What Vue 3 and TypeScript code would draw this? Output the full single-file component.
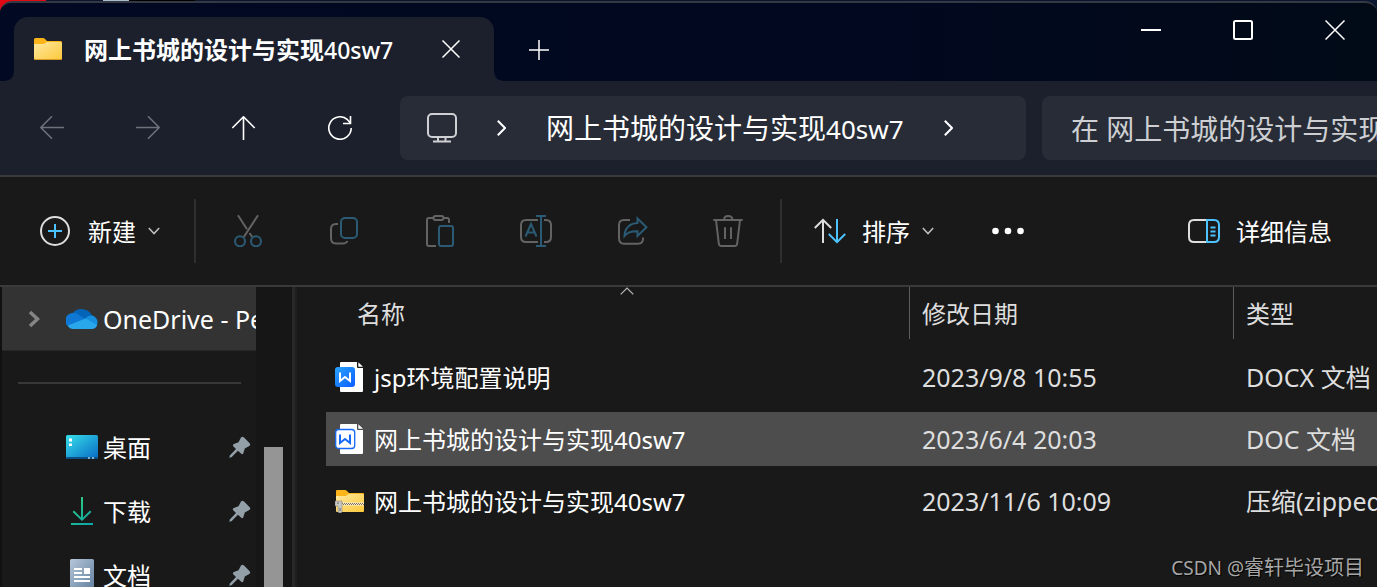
<script setup lang="ts">
import { ref } from 'vue'

interface FileRow {
  name: string
  date: string
  type: string
  icon: 'docx' | 'doc' | 'zip'
}

interface Place {
  name: string
  icon: 'desktop' | 'download' | 'document'
}

const folder = '网上书城的设计与实现'
const suffix = '40sw7'

const files: FileRow[] = [
  { name: 'jsp环境配置说明', date: '2023/9/8 10:55', type: 'DOCX 文档', icon: 'docx' },
  { name: folder + suffix, date: '2023/6/4 20:03', type: 'DOC 文档', icon: 'doc' },
  { name: folder + suffix, date: '2023/11/6 10:09', type: '压缩(zipped)', icon: 'zip' },
]

const places: Place[] = [
  { name: '桌面', icon: 'desktop' },
  { name: '下载', icon: 'download' },
  { name: '文档', icon: 'document' },
]

const selected = ref(1)
const query = ref('')
</script>

<template>
  <div class="desktop">
    <div class="window">
      <header class="titlebar">
        <div class="tab">
          <svg class="tab-folder" width="28" height="22" viewBox="0 0 28 22" aria-hidden="true">
            <defs>
              <linearGradient id="folderFace" x1="0" y1="0" x2="1" y2="1">
                <stop offset="0" stop-color="#ffe8a0" />
                <stop offset="1" stop-color="#fdc93c" />
              </linearGradient>
            </defs>
            <path d="M0 1.5Q0 0 1.5 0H9Q10 0 10.8.8L13 3H26.500Q28 3 28 4.500V21H0Z" fill="#fbb51a" />
            <path d="M0 6H9.500Q10.500 6 11.200 5.200L12.500 4H26.500Q28 4 28 5V20.500Q28 21.500 27 21.500H1Q0 21.500 0 20.500Z" fill="url(#folderFace)" />
            <path d="M0 20.500Q0 22 1.500 22H26.500Q28 22 28 20.500Q28 21.300 26.500 21.300H1.500Q0 21.300 0 20.500Z" fill="#f0a51a" />
          </svg>
          <span class="tab-title">{{ folder }}<span class="tab-latin">{{ suffix }}</span></span>
          <button class="tab-close" type="button" aria-label="关闭标签页">
            <svg width="18" height="18" viewBox="0 0 18 18"><path d="M.5.5l17 17M17.500.5l-17 17" /></svg>
          </button>
        </div>
        <button class="tab-add" type="button" aria-label="新建标签页">
          <svg width="20" height="20" viewBox="0 0 20 20"><path d="M10 0v20M0 10h20" /></svg>
        </button>
        <div class="controls">
          <button type="button" aria-label="最小化">
            <svg width="20" height="20" viewBox="0 0 20 20"><path d="M0 10h20" stroke-width="2" /></svg>
          </button>
          <button type="button" aria-label="最大化">
            <svg width="20" height="20" viewBox="0 0 20 20"><rect x="1" y="1" width="18" height="18" rx="1.500" stroke-width="2" /></svg>
          </button>
          <button type="button" aria-label="关闭">
            <svg width="20" height="20" viewBox="0 0 20 20"><path d="M.5.5l19 19M19.500.5l-19 19" /></svg>
          </button>
        </div>
      </header>

      <nav class="navbar" aria-label="导航">
        <div class="nav-buttons">
          <button class="dim" type="button" aria-label="后退">
            <svg width="24" height="24" viewBox="0 0 24 24"><path d="M24 11.500H1M12 .3L.8 11.500 12 22.700" /></svg>
          </button>
          <button class="dim" type="button" aria-label="前进">
            <svg width="24" height="24" viewBox="0 0 24 24"><path d="M0 11.500h23M12 .3L23.200 11.500 12 22.700" /></svg>
          </button>
          <button type="button" aria-label="上移">
            <svg width="24" height="24" viewBox="0 0 24 24"><path d="M11.500 24V1M.3 12L11.500 .8 22.700 12" /></svg>
          </button>
          <button type="button" aria-label="刷新">
            <svg width="24" height="24" viewBox="0 0 24 24"><path d="M23.200 12A11.200 11.200 0 1 1 19.500 3.700L22.500 7M22.500 0V7.500H15" /></svg>
          </button>
        </div>
        <div class="address">
          <svg width="30" height="30" viewBox="0 0 30 30" class="monitor" aria-hidden="true">
            <rect x="1" y="1" width="28" height="23" rx="4" />
            <path d="M11 24v4M18.500 24v4M6 28.500h18" />
          </svg>
          <svg width="9" height="16" viewBox="0 0 9 16" class="crumb" aria-hidden="true"><path d="M.8.8L8 8 .8 15.200" /></svg>
          <span class="address-text">{{ folder }}<span class="address-latin">{{ suffix }}</span></span>
          <svg width="9" height="16" viewBox="0 0 9 16" class="crumb" aria-hidden="true"><path d="M.8.8L8 8 .8 15.200" /></svg>
        </div>
        <input v-model="query" class="search" type="text" aria-label="搜索" :placeholder="`在 ${folder}`" />
      </nav>

      <div class="toolbar" role="toolbar" aria-label="命令">
        <button class="command new" type="button">
          <svg width="30" height="30" viewBox="0 0 30 30" aria-hidden="true">
            <circle cx="15" cy="15" r="14" class="lt" /><path d="M15 8v14M8 15h14" class="accent" />
          </svg>
          <span>新建</span>
          <svg width="12" height="8" viewBox="0 0 12 8" class="drop" aria-hidden="true"><path d="M.8 1L6 6.500 11.200 1" /></svg>
        </button>
        <span class="divider"></span>
        <button class="tool" type="button" aria-label="剪切">
          <svg width="32" height="32" viewBox="0 0 32 32">
            <path d="M6 .3L15 14.200M26 .3L11.800 22M17.500 18L20.200 22" class="g" />
            <circle cx="8" cy="26.300" r="5" class="b" /><circle cx="24" cy="26.300" r="5" class="b" />
          </svg>
        </button>
        <button class="tool" type="button" aria-label="复制">
          <svg width="32" height="32" viewBox="0 0 32 32">
            <path d="M10 9H8Q3 9 3 14V23Q3 28.500 8 28.500H14.500Q18.500 28.500 19.500 26" class="g" />
            <rect x="13" y="3" width="16" height="20" rx="4" class="b" />
          </svg>
        </button>
        <button class="tool" type="button" aria-label="粘贴">
          <svg width="32" height="32" viewBox="0 0 32 32">
            <path d="M9 3H5Q3 3 3 5V29Q3 31 5 31H12M20 3H23Q25 3 25 5V8" class="g" />
            <rect x="9.500" y="1" width="10" height="4" rx="2" class="g" />
            <rect x="15" y="11" width="14" height="20" rx="2" class="b" />
          </svg>
        </button>
        <button class="tool" type="button" aria-label="重命名">
          <svg width="32" height="32" viewBox="0 0 32 32">
            <path d="M18 5H6Q1 5 1 10V22Q1 27 6 27H18M24 5H26Q31 5 31 10V22Q31 27 26 27H24" class="g" />
            <path d="M16 1H26M16 31H26M21 1V31M5.500 21.500L11 9L16.500 21.500M7.500 17.500H14.500" class="b" />
          </svg>
        </button>
        <button class="tool" type="button" aria-label="共享">
          <svg width="32" height="32" viewBox="0 0 32 32">
            <path d="M14 5H8Q3 5 3 10V23Q3 28.700 8 28.700H22Q27 28.700 27 24V22.500" class="g" />
            <path d="M21.500 3.500L30.500 12.300L21.500 21V16.200C15 16 11 17.500 8.500 21C8.500 14 13 8.500 21.500 8Z" class="b" />
          </svg>
        </button>
        <button class="tool" type="button" aria-label="删除">
          <svg width="32" height="32" viewBox="0 0 32 32">
            <path d="M1.300 5H30.700M12 5Q12 1 16.200 1T20.400 5M4 5L6.800 28.500Q7 31 9.500 31H22.500Q25 31 25.200 28.500L28 5M13 12.300V24M19 12.300V24" class="g" />
          </svg>
        </button>
        <span class="divider"></span>
        <button class="command sort" type="button">
          <svg width="32" height="32" viewBox="0 0 32 32" aria-hidden="true">
            <path d="M9 28V5M.8 13L9 4.800L17.200 13" class="lt" />
            <path d="M23 4V27M14.800 19L23 27.200L31.200 19" class="accent" />
          </svg>
          <span>排序</span>
          <svg width="12" height="8" viewBox="0 0 12 8" class="drop" aria-hidden="true"><path d="M.8 1L6 6.500 11.200 1" /></svg>
        </button>
        <button class="more" type="button" aria-label="查看更多">
          <svg width="32" height="8" viewBox="0 0 32 8"><circle cx="3.500" cy="4" r="3.300" /><circle cx="16" cy="4" r="3.300" /><circle cx="28.500" cy="4" r="3.300" /></svg>
        </button>
        <button class="command details" type="button">
          <svg width="32" height="32" viewBox="0 0 32 32" aria-hidden="true">
            <path d="M19 5H6Q1 5 1 10V22Q1 27 6 27H19" class="lt" />
            <path d="M19 5H26Q31 5 31 10V22Q31 27 26 27H19ZM22.500 12.500H27.500M22.500 16.500H27.500M22.500 20.500H27.500" class="accent" />
          </svg>
          <span>详细信息</span>
        </button>
      </div>

      <div class="body">
        <aside class="sidebar">
          <div class="tree">
            <a href="#" class="place onedrive">
              <svg class="expander" width="12" height="18" viewBox="0 0 12 18" aria-hidden="true"><path d="M2 2L9.500 9 2 16" /></svg>
              <span class="icon-slot">
                <svg width="32" height="21" viewBox="0 0 32 21" aria-hidden="true">
                  <path d="M6 6.500A11 10 0 0 1 26 7.500L20 14L8 12Z" fill="#0364b8" />
                  <path d="M7.500 5A8 8 0 0 1 13 7L20 11.500L8 20H6A7.500 7.500 0 0 1 7.500 5Z" fill="#0f78d4" />
                  <path d="M19 11Q22 6.800 26 7.500A7 7 0 0 1 30.500 18L20 13Z" fill="#1490df" />
                  <path d="M1.800 17.500L19.500 10.500L31.200 17Q30 21 25.500 21H7Q3.500 21 1.800 17.500Z" fill="#28a8ea" />
                </svg>
              </span>
              <span class="place-name wide">OneDrive - Personal</span>
            </a>
            <div class="rule"></div>
            <a v-for="p in places" :key="p.name" href="#" class="place">
              <span class="expander-gap"></span>
              <span class="icon-slot">
                <svg v-if="p.icon === 'desktop'" width="32" height="24" viewBox="0 0 32 24" aria-hidden="true">
                  <defs>
                    <linearGradient id="deskFace" x1="0" y1="0" x2="1" y2="1">
                      <stop offset="0" stop-color="#37e0ea" /><stop offset="1" stop-color="#0869c4" />
                    </linearGradient>
                  </defs>
                  <rect width="32" height="24" rx="1.500" fill="url(#deskFace)" />
                  <path d="M0 22H32Q32 24 30.500 24H1.500Q0 24 0 22Z" fill="#0a4f86" />
                  <path d="M3 3.500H6V6.500H3ZM3 8.500H6V11H3Z" fill="#fff" />
                  <path d="M22 22.300h2v1.500h-2ZM26 22.300h2v1.500h-2Z" fill="#a8cbe6" />
                </svg>
                <svg v-else-if="p.icon === 'download'" width="22" height="28" viewBox="0 0 22 28" aria-hidden="true">
                  <defs>
                    <linearGradient id="downFace" gradientUnits="userSpaceOnUse" x1="0" y1="0" x2="22" y2="28">
                      <stop offset="0" stop-color="#35d07f" /><stop offset="1" stop-color="#0aa5a8" />
                    </linearGradient>
                  </defs>
                  <path d="M10 0h2v20.500l7-7 1.400 1.400L11 24 1.600 14.900 3 13.500l7 7ZM0 26H22V28H0Z" fill="url(#downFace)" />
                </svg>
                <svg v-else width="24" height="32" viewBox="0 0 24 32" aria-hidden="true">
                  <defs>
                    <linearGradient id="paperFace" x1="0" y1="0" x2="1" y2="1">
                      <stop offset="0" stop-color="#b6c6d8" /><stop offset="1" stop-color="#607f9f" />
                    </linearGradient>
                  </defs>
                  <rect width="24" height="32" rx="1.500" fill="url(#paperFace)" />
                  <path d="M4 9H12V11H4ZM4 13H12V15H4ZM14 9H20V15H14ZM4 17H20V19H4ZM4 21H20V23H4Z" fill="#fff" />
                </svg>
              </span>
              <span class="place-name">{{ p.name }}</span>
              <svg class="pin" width="22" height="22" viewBox="0 0 22 22" aria-hidden="true">
                <path d="M12 1.500Q13.500 0 15 1.500L20.700 7.200Q22 8.800 20.300 9.900L15.800 12.500L14.300 17.200Q13.500 19 12 17.600L8.900 14.800L2.500 21.200L.3 21.700L.8 19.500L7 13L4.200 10.200Q3 8.600 4.900 7.900L9.500 6.300Z" fill="#94a0a8" />
              </svg>
            </a>
          </div>
          <div class="track"><div class="thumb"></div></div>
          <div class="splitter"></div>
        </aside>

        <main class="listing">
          <table>
            <colgroup><col class="c-name" /><col class="c-date" /><col /></colgroup>
            <thead>
              <tr>
                <th class="th-name" scope="col" aria-sort="ascending">
                  <button type="button">名称</button>
                  <svg class="caret" width="14" height="8" viewBox="0 0 14 8" aria-hidden="true"><path d="M.7 7.300L7 1l6.300 6.300" /></svg>
                </th>
                <th scope="col"><button type="button">修改日期</button></th>
                <th scope="col"><button type="button" class="last">类型</button></th>
              </tr>
            </thead>
            <tbody>
              <tr v-for="(f, i) in files" :key="i" :class="{ selected: selected === i }" @click="selected = i">
                <td>
                  <div class="file">
                    <svg v-if="f.icon !== 'zip'" width="30" height="32" viewBox="0 0 30 32" aria-hidden="true">
                      <defs>
                        <linearGradient id="wordFace" x1="0" y1="0" x2="1" y2="1">
                          <stop offset="0" stop-color="#2aa5ff" /><stop offset="1" stop-color="#0a5cff" />
                        </linearGradient>
                      </defs>
                      <path d="M6 1H22V6Q22 7 23 7H28V30Q28 31 27 31H6Q5 31 5 30V2Q5 1 6 1Z" fill="#fff" />
                      <path d="M23.300 1.300L28 5.800H23.300Z" fill="#fff" />
                      <rect v-if="f.icon === 'docx'" x="0" y="6" width="20" height="20" rx="3" fill="url(#wordFace)" />
                      <rect v-else x=".7" y="6.500" width="19" height="19" rx="3" fill="#fff" stroke="#1469f5" stroke-width="1.300" />
                      <path d="M5 11.500V20L10 16L15 20V11.500" fill="none" :stroke="f.icon === 'docx' ? '#fff' : '#1469f5'" stroke-width="2" />
                    </svg>
                    <svg v-else width="30" height="24" viewBox="0 0 30 24" aria-hidden="true">
                      <path d="M1 2Q1 1 2 1H10Q11 1 12 2L14 4H28Q29 4 29 5V22H1Z" fill="#fbb51a" />
                      <path d="M1 7H11L13.500 5H28Q29 5 29 6V22Q29 23 28 23H2Q1 23 1 22Z" fill="url(#folderFace)" />
                      <path d="M7 13.500H29V16.500H7Z" fill="#f6eccb" />
                      <path d="M7 14.500H29" stroke="#77705c" stroke-width="1" stroke-dasharray="1 1" fill="none" />
                      <path d="M8 15.500H29" stroke="#77705c" stroke-width="1" stroke-dasharray="1 1" fill="none" />
                      <path d="M0 12H7V22.500Q7 24 5 24T3 22.500V17H0Z" fill="#c9c9c3" stroke="#77736a" stroke-width=".5" />
                      <path d="M2 14H4M5 19v3" stroke="#66635c" stroke-width="1" />
                    </svg>
                    <span>{{ f.name }}</span>
                  </div>
                </td>
                <td class="meta">{{ f.date }}</td>
                <td class="meta">{{ f.type }}</td>
              </tr>
            </tbody>
          </table>
          <div class="watermark"><span class="mark-latin">CSDN @</span>睿轩毕设项目</div>
        </main>
      </div>
    </div>
  </div>
</template>

<style>
body {
  margin: 0;
  background: #191919;
}
</style>

<style scoped>
* {
  box-sizing: border-box;
}
.desktop {
  height: 100vh;
  padding-top: 1px;
  overflow: hidden;
  font-family: 'Noto Sans', 'Noto Sans CJK SC', sans-serif;
  font-size: 24px;
  line-height: 32px;
  color: #fff;
  background: linear-gradient(90deg, #e00914 46px, #0b1730 46px 103px, #a9bccb 103px 129px, #000 129px 195px, #0b1730 195px);
}
button {
  display: flex;
  align-items: center;
  justify-content: center;
  margin: 0;
  padding: 0;
  border: 0;
  background: none;
  color: inherit;
  font: inherit;
}
svg {
  display: block;
  flex: none;
}
a {
  color: inherit;
  text-decoration: none;
}
.window {
  display: flex;
  flex-direction: column;
  height: 100%;
  border-top: 2px solid #343842;
  border-radius: 12px 12px 0 0;
  overflow: hidden;
  background: #191919;
}

.titlebar {
  display: flex;
  flex: none;
  align-items: flex-end;
  height: 78px;
  padding-left: 14px;
  background: linear-gradient(90deg, #010a22, #010820 60%, #010a17);
}
.tab {
  position: relative;
  display: flex;
  align-items: center;
  width: 480px;
  height: 64px;
  padding: 0 34px 0 20px;
  border-radius: 14px 14px 0 0;
  background: #1b202c;
}
.tab::before,
.tab::after {
  content: '';
  position: absolute;
  bottom: 0;
  width: 8px;
  height: 8px;
}
.tab::before {
  right: 100%;
  background: radial-gradient(circle at 0 0, transparent 7px, #1b202c 8px);
}
.tab::after {
  left: 100%;
  background: radial-gradient(circle at 100% 0, transparent 7px, #1b202c 8px);
}
.tab-title {
  flex: 1;
  margin-left: 22px;
  padding-top: 2px;
  font-weight: 700;
  white-space: nowrap;
}
.tab-latin {
  font-weight: 500;
  font-size: 23px;
}
.tab-close svg,
.tab-add svg,
.controls svg {
  fill: none;
  stroke: #fff;
  stroke-width: 1.5;
}
.tab-add {
  width: 64px;
  height: 62px;
  margin-left: 13px;
}
.controls {
  display: flex;
  gap: 8px;
  align-self: flex-start;
  margin-left: auto;
}
.controls button {
  width: 84px;
  height: 54px;
}

.navbar {
  display: flex;
  flex: none;
  align-items: flex-start;
  height: 96px;
  padding-top: 15px;
  border-bottom: 2px solid #3a3a3a;
  background: #1b202c;
}
.nav-buttons {
  display: flex;
  flex: none;
  width: 400px;
  padding-left: 4px;
}
.nav-buttons button {
  width: 96px;
  height: 64px;
}
.nav-buttons svg {
  fill: none;
  stroke: #fff;
  stroke-width: 1.6;
}
.nav-buttons .dim svg {
  stroke: #6d717a;
}
.address {
  display: flex;
  flex: 1;
  align-items: center;
  gap: 40px;
  min-width: 0;
  height: 64px;
  padding-left: 27px;
  border-radius: 8px;
  background: #272c37;
}
.monitor {
  fill: none;
  stroke: #cfd0d3;
  stroke-width: 2;
}
.crumb {
  fill: none;
  stroke: #fff;
  stroke-width: 2;
}
.address-text {
  font-size: 28px;
  white-space: nowrap;
}
.address-latin {
  font-size: 26px;
}
.search {
  flex: none;
  width: 335px;
  height: 64px;
  margin-left: 16px;
  padding: 2px 0 0 29px;
  border: 0;
  border-radius: 8px 0 0 8px;
  background: #272c37;
  color: #fff;
  font: inherit;
  font-size: 28px;
}
.search::placeholder {
  color: #cdcfd2;
  opacity: 1;
}

.toolbar {
  display: flex;
  flex: none;
  align-items: center;
  height: 110px;
  padding: 0 45px 0 40px;
  border-bottom: 2px solid #3a3a3a;
}
.command {
  height: 64px;
  white-space: nowrap;
}
.command span {
  padding-top: 2px;
}
.command svg,
.tool svg {
  fill: none;
  stroke-width: 2;
}
.lt {
  stroke: #dedede;
}
.accent {
  stroke: #4cc2ff;
}
.g {
  stroke: #636363;
}
.b {
  stroke: #2b5b74;
}
.new {
  gap: 18px;
}
.sort,
.details {
  gap: 16px;
}
.command .drop {
  margin-left: -4px;
  stroke: #bdbdbd;
  stroke-width: 1.6;
}
.new .drop {
  margin-left: -6px;
}
.divider {
  flex: none;
  width: 2px;
  height: 64px;
  margin: 0 4px;
  background: #2e2e2e;
}
.new + .divider {
  margin-left: 34px;
}
.tool {
  flex: none;
  width: 96px;
  height: 64px;
}
.sort {
  margin-left: 28px;
}
.more {
  height: 64px;
  margin-left: 58px;
}
.more svg {
  fill: #fff;
}
.details {
  margin-left: auto;
}

.body {
  display: flex;
  flex: 1;
  min-height: 0;
}
.sidebar {
  display: flex;
  flex: none;
  width: 297px;
  overflow: hidden;
}
.tree {
  width: 256px;
  border-left: 2px solid #111;
}
.place {
  display: flex;
  align-items: center;
  height: 64px;
  padding: 0 5px 0 26px;
}
.onedrive {
  padding-right: 0;
  border-bottom: 1px solid #272727;
  background: #333;
}
.expander,
.expander-gap {
  flex: none;
  width: 12px;
}
.expander {
  fill: none;
  stroke: #858585;
  stroke-width: 3.5;
}
.icon-slot {
  display: flex;
  flex: none;
  justify-content: center;
  width: 32px;
  margin: 0 5px 0 26px;
}
.place-name {
  flex: 1;
  min-width: 0;
  padding-top: 2px;
  overflow: hidden;
  white-space: nowrap;
}
.wide {
  padding-top: 0;
  font-size: 25px;
}
.rule {
  height: 64px;
  padding: 31px 15px 0 16px;
}
.rule::before {
  content: '';
  display: block;
  height: 2px;
  background: #383838;
}
.track {
  width: 36px;
  padding: 160px 9px 0 8px;
  background: #161616;
}
.thumb {
  height: 100%;
  background: #959595;
}
.splitter {
  width: 5px;
  border-right: 2px solid #1e1e1e;
  background: #282828;
}

.listing {
  position: relative;
  flex: 1;
  min-width: 0;
  padding-left: 29px;
  overflow: hidden;
}
table {
  width: 100%;
  table-layout: fixed;
  border-collapse: separate;
  border-spacing: 0;
}
.c-name {
  width: 584px;
}
.c-date {
  width: 324px;
}
th {
  position: relative;
  height: 59px;
  padding: 0;
  vertical-align: top;
  font-weight: 400;
  color: #dedede;
}
th button {
  justify-content: flex-start;
  width: 100%;
  height: 52px;
  padding: 2px 0 0 12px;
  border-right: 1px solid #5c5c5c;
}
th .last {
  border-right: 0;
}
.th-name button {
  padding-left: 31px;
}
.caret {
  position: absolute;
  top: 0;
  left: 294px;
  fill: none;
  stroke: #bababa;
  stroke-width: 1.2;
}
td {
  height: 62px;
  padding: 0 0 0 12px;
  border: solid transparent;
  border-width: 4px 0;
  background-clip: padding-box;
  overflow: hidden;
  white-space: nowrap;
}
td:first-child {
  padding-left: 9px;
}
.selected td {
  background-color: #4d4d4d;
}
.meta {
  font-size: 25px;
  color: #dedede;
}
.file {
  display: flex;
  align-items: center;
  gap: 9px;
}
.file span {
  padding-top: 2px;
}
.watermark {
  position: absolute;
  right: 13px;
  bottom: 3px;
  font-size: 20px;
  color: #a6a6a6;
  text-shadow: 1px 1px 1px #000;
}
.mark-latin {
  font-size: 19px;
}
</style>
